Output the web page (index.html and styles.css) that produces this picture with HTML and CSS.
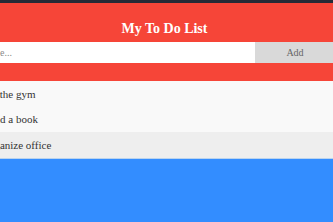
FILE: index.html
```html
<!DOCTYPE html>
<html>
<head>
<meta charset="utf-8">
<link rel="stylesheet" href="styles.css">
</head>
<body>
<div class="topbar"></div>
<div class="header">
  <h2 class="title">My To Do List</h2>
  <div class="entry">
    <input class="field" type="text" placeholder="Title...">
    <span class="add">Add</span>
  </div>
</div>
<ul class="list">
  <li class="item odd">Hit the gym</li>
  <li class="item odd">Read a book</li>
  <li class="item even">Organize office</li>
</ul>
<div class="footer"></div>
</body>
</html>
```
FILE: styles.css
```css
html, body {
  margin: 0;
  padding: 0;
  height: 100%;
  overflow: hidden;
  font-family: "Liberation Serif", "Times New Roman", serif;
}
* {
  box-sizing: border-box;
}
body {
  display: flex;
  flex-direction: column;
  background: #338dff;
}
.topbar {
  height: 3px;
  background: #262a36;
}
.header {
  background: #f64538;
  padding: 18px 0 18px;
}
.title {
  margin: 0 0 6px;
  padding-right: 4px;
  text-align: center;
  color: #fff;
  font-size: 14px;
  line-height: 15px;
  font-weight: bold;
}
.entry {
  display: flex;
  height: 21px;
}
.field {
  flex: 1;
  min-width: 0;
  margin: 0 0 0 -14px;
  padding: 0;
  border: none;
  outline: none;
  background: #fff;
  font-family: "Liberation Serif", serif;
  font-size: 10px;
  color: #333;
}
.field::placeholder {
  color: #8a8a8a;
}
.add {
  flex: 0 0 78px;
  background: #d9d9d9;
  color: #666;
  font-size: 10px;
  display: flex;
  align-items: center;
  justify-content: center;
  padding-left: 2px;
}
.list {
  list-style: none;
  margin: 0;
  padding: 0;
}
.item {
  height: 25.5px;
  display: flex;
  align-items: center;
  margin-left: -17px;
  font-size: 11px;
  color: #333;
}
.odd {
  background: #f9f9f9;
}
.even {
  background: #eeeeee;
}
.footer {
  flex: 1;
  border-top: 1px solid #b9d3ee;
  background: #338dff;
}
```
